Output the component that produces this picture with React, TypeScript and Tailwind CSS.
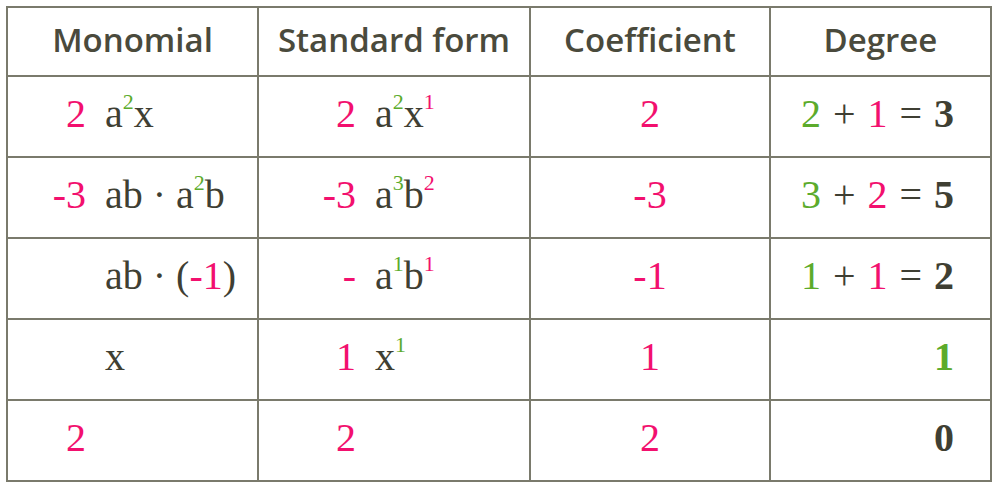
const PINK = "text-[#f2106e]";
const GREEN = "text-[#5cab2c]";

function Sup({ children, color }: { children: React.ReactNode; color: string }) {
  return <sup className={`${color} text-[22px] relative -top-[18px] align-baseline`}>{children}</sup>;
}

function Split({ coef, rest, width }: { coef?: React.ReactNode; rest?: React.ReactNode; width: string }) {
  return (
    <div className="flex items-baseline">
      <div className={`${width} shrink-0 text-right ${PINK}`}>{coef}</div>
      <div className="pl-[19px] whitespace-nowrap">{rest}</div>
    </div>
  );
}

const rows = [
  {
    mono: [<>2</>, <>a<Sup color={GREEN}>2</Sup>x</>],
    std: [<>2</>, <>a<Sup color={GREEN}>2</Sup>x<Sup color={PINK}>1</Sup></>],
    coef: "2",
    deg: <><span className={GREEN}>2</span> + <span className={PINK}>1</span> = <b>3</b></>,
  },
  {
    mono: [<>-3</>, <>ab · a<Sup color={GREEN}>2</Sup>b</>],
    std: [<>-3</>, <>a<Sup color={GREEN}>3</Sup>b<Sup color={PINK}>2</Sup></>],
    coef: "-3",
    deg: <><span className={GREEN}>3</span> + <span className={PINK}>2</span> = <b>5</b></>,
  },
  {
    mono: [null, <>ab · (<span className={PINK}>-1</span>)</>],
    std: [<>-</>, <>a<Sup color={GREEN}>1</Sup>b<Sup color={PINK}>1</Sup></>],
    coef: "-1",
    deg: <><span className={GREEN}>1</span> + <span className={PINK}>1</span> = <b>2</b></>,
  },
  {
    mono: [null, <>x</>],
    std: [<>1</>, <>x<Sup color={GREEN}>1</Sup></>],
    coef: "1",
    deg: <b className={GREEN}>1</b>,
  },
  {
    mono: [<>2</>, null],
    std: [<>2</>, null],
    coef: "2",
    deg: <b>0</b>,
  },
];

export default function App() {
  const cell = "border-2 border-[#7a7a6c]";
  return (
    <div className="w-[1000px] h-[488px] bg-white pt-[6px] pl-[6px]">
      <table className="border-collapse table-fixed w-[984px] text-[#3f3f33]">
        <colgroup>
          <col className="w-[251px]" />
          <col className="w-[272px]" />
          <col className="w-[240px]" />
          <col className="w-[221px]" />
        </colgroup>
        <thead>
          <tr className="h-[69px] font-['Open_Sans',sans-serif] font-semibold text-[33px] text-[#4a4a3c]">
            <th className={`${cell} font-semibold pb-[4px]`}>Monomial</th>
            <th className={`${cell} font-semibold pb-[4px]`}>Standard form</th>
            <th className={`${cell} font-semibold pb-[4px]`}>Coefficient</th>
            <th className={`${cell} font-semibold pb-[4px]`}>Degree</th>
          </tr>
        </thead>
        <tbody className="font-['Liberation_Serif',serif] text-[40px] leading-none">
          {rows.map((r, i) => (
            <tr key={i} className="h-[81px]">
              <td className={`${cell} pb-[5px]`}>
                <Split width="w-[78px]" coef={r.mono[0]} rest={r.mono[1]} />
              </td>
              <td className={`${cell} pb-[5px]`}>
                <Split width="w-[97px]" coef={r.std[0]} rest={r.std[1]} />
              </td>
              <td className={`${cell} pb-[5px] text-center ${PINK}`}>{r.coef}</td>
              <td className={`${cell} pb-[5px] text-right pr-[36px] whitespace-nowrap [word-spacing:2px]`}>{r.deg}</td>
            </tr>
          ))}
        </tbody>
      </table>
    </div>
  );
}
